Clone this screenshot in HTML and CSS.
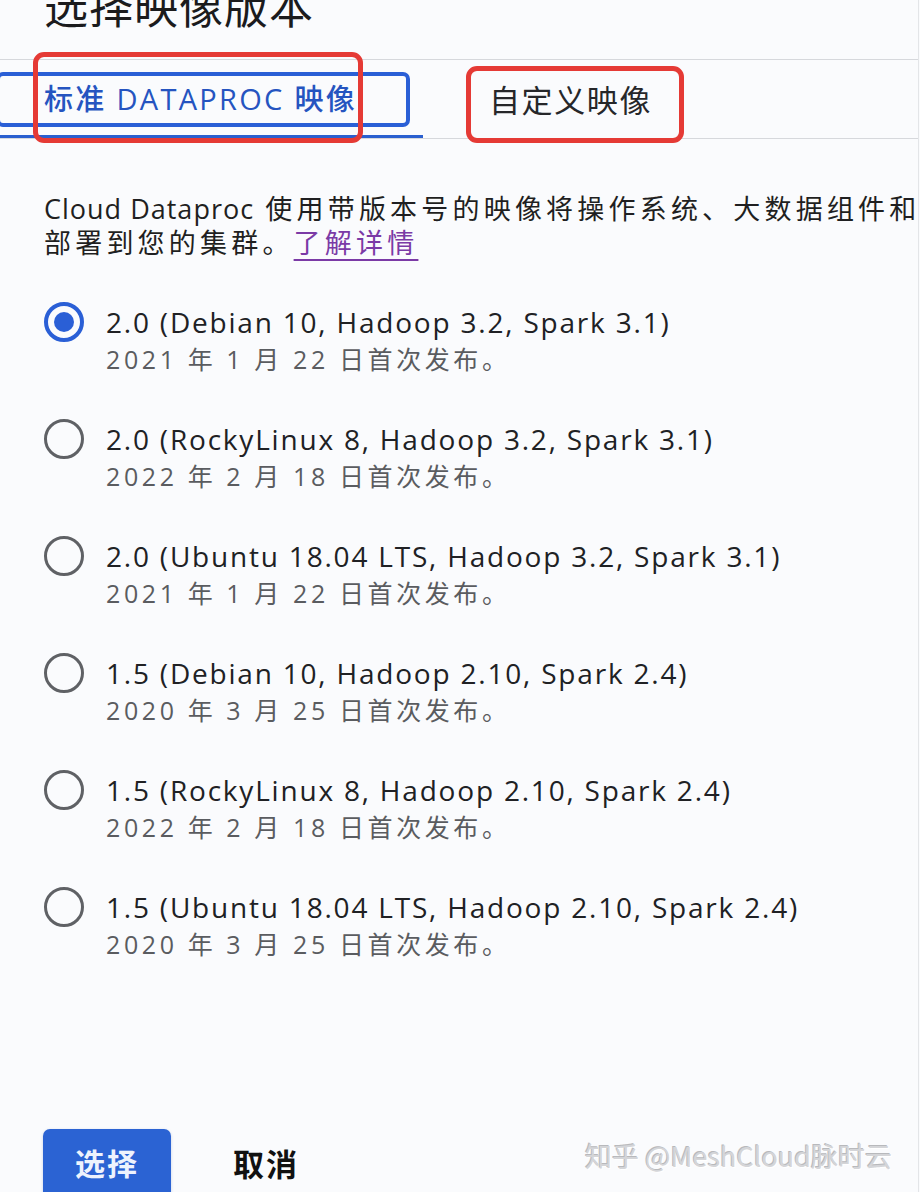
FILE: index.html
```html
<!DOCTYPE html>
<html lang="zh-CN">
<head>
<meta charset="utf-8">
<title>选择映像版本</title>
<link rel="stylesheet" href="styles.css">
</head>
<body>
<div class="page">
  <header class="head">
    <h1 class="title">选择映像版本</h1>
  </header>
  <nav class="tabs">
    <div class="tab tab-active"><span class="tab-label">标准 DATAPROC 映像</span></div>
    <div class="tab tab-other"><span class="tab-label">自定义映像</span></div>
    <div class="mark mark-1"></div>
    <div class="mark mark-2"></div>
  </nav>
  <p class="intro"><span class="line"><span class="latin">Cloud Dataproc</span> 使用带版本号的映像将操作系统、大数据组件和其他软件</span><span class="line">部署到您的集群。<a class="link" href="#">了解详情</a></span></p>
  <ul class="opts">
    <li class="opt">
      <span class="radio radio-on"></span>
      <div class="opt-text"><div class="opt-title">2.0 (Debian 10, Hadoop 3.2, Spark 3.1)</div><div class="opt-sub">2021 年 1 月 22 日首次发布。</div></div>
    </li>
    <li class="opt">
      <span class="radio"></span>
      <div class="opt-text"><div class="opt-title">2.0 (RockyLinux 8, Hadoop 3.2, Spark 3.1)</div><div class="opt-sub">2022 年 2 月 18 日首次发布。</div></div>
    </li>
    <li class="opt">
      <span class="radio"></span>
      <div class="opt-text"><div class="opt-title">2.0 (Ubuntu 18.04 LTS, Hadoop 3.2, Spark 3.1)</div><div class="opt-sub">2021 年 1 月 22 日首次发布。</div></div>
    </li>
    <li class="opt">
      <span class="radio"></span>
      <div class="opt-text"><div class="opt-title">1.5 (Debian 10, Hadoop 2.10, Spark 2.4)</div><div class="opt-sub">2020 年 3 月 25 日首次发布。</div></div>
    </li>
    <li class="opt">
      <span class="radio"></span>
      <div class="opt-text"><div class="opt-title">1.5 (RockyLinux 8, Hadoop 2.10, Spark 2.4)</div><div class="opt-sub">2022 年 2 月 18 日首次发布。</div></div>
    </li>
    <li class="opt">
      <span class="radio"></span>
      <div class="opt-text"><div class="opt-title">1.5 (Ubuntu 18.04 LTS, Hadoop 2.10, Spark 2.4)</div><div class="opt-sub">2020 年 3 月 25 日首次发布。</div></div>
    </li>
  </ul>
  <footer class="actions">
    <button class="btn btn-primary">选择</button>
    <button class="btn btn-text">取消</button>
    <span class="watermark">知乎 @MeshCloud脉时云</span>
  </footer>
</div>
</body>
</html>
```

FILE: styles.css
```css
html, body {
  margin: 0;
  padding: 0;
  background: #fafbfd;
}
body {
  font-family: "Open Sans", "Noto Sans CJK SC", "Noto Sans", sans-serif;
  color: #202124;
  width: 920px;
  height: 1192px;
  overflow: hidden;
}
.page {
  width: 918px;
  height: 1192px;
  border-right: 1px solid #e3e5e8;
  overflow: hidden;
  position: relative;
}
.head {
  height: 59px;
  border-bottom: 1px solid #d6d8dc;
  overflow: hidden;
}
.title {
  margin: -19px 0 0 44px;
  font-family: "Noto Sans CJK SC", sans-serif;
  font-size: 44px;
  line-height: 48px;
  font-weight: 400;
  color: #1b1b1d;
  letter-spacing: 1px;
}
.tabs {
  position: relative;
  height: 78px;
  border-bottom: 1px solid #d6d8dc;
  display: flex;
}
.tab {
  height: 78px;
  display: flex;
  align-items: center;
  box-sizing: border-box;
}
.tab-active {
  width: 423px;
  position: relative;
  border-bottom: 3px solid #2a5fcf;
  padding-left: 44px;
}
.tab-active::before {
  content: "";
  position: absolute;
  left: -4px;
  top: 12px;
  width: 414px;
  height: 55px;
  border: 4px solid #2a5fd6;
  border-radius: 7px;
  box-sizing: border-box;
}
.tab-active .tab-label {
  color: #2554c0;
  font-size: 29px;
  font-weight: 500;
  letter-spacing: 2.3px;
  margin-top: -2px;
}
.tab-other {
  padding-left: 66px;
}
.tab-other .tab-label {
  color: #26272a;
  font-size: 31px;
  letter-spacing: 1.6px;
  margin-top: -2px;
}
.mark {
  position: absolute;
  border: 5px solid #e53a35;
  border-radius: 11px;
  box-sizing: border-box;
}
.mark-1 {
  left: 33px;
  top: -8px;
  width: 330px;
  height: 91px;
}
.mark-2 {
  left: 466px;
  top: 6px;
  width: 218px;
  height: 77px;
}
.intro {
  margin: 53px 0 0 44px;
  font-size: 27px;
  line-height: 34px;
  letter-spacing: 4.2px;
  color: #1f1f21;
}
.latin {
  letter-spacing: 1px;
}
.line {
  display: block;
  white-space: nowrap;
}
.link {
  color: #7b3aa6;
  text-decoration: underline;
  text-underline-offset: 6px;
  text-decoration-thickness: 2px;
}
.opts {
  list-style: none;
  margin: 44px 0 0 44px;
  padding: 0;
  display: flex;
  flex-direction: column;
  gap: 44px;
}
.opt {
  display: flex;
  align-items: flex-start;
  gap: 22px;
}
.radio {
  flex: none;
  width: 40px;
  height: 40px;
  margin-top: -2px;
  border-radius: 50%;
  border: 3.5px solid #5f6165;
  box-sizing: border-box;
  position: relative;
}
.radio-on {
  border: 4px solid #2a5fd6;
}
.radio-on::after {
  content: "";
  position: absolute;
  left: 6px;
  top: 6px;
  width: 20px;
  height: 20px;
  border-radius: 50%;
  background: #2a5fd6;
}
.opt-title {
  font-size: 28px;
  line-height: 36px;
  color: #202124;
  letter-spacing: 1.8px;
  white-space: nowrap;
}
.opt-sub {
  margin-top: 1px;
  font-size: 25px;
  line-height: 36px;
  color: #5a5c60;
  letter-spacing: 3.6px;
  white-space: nowrap;
}
.actions {
  position: absolute;
  left: 0;
  right: 0;
  top: 1129px;
  height: 80px;
  display: flex;
  align-items: flex-start;
  padding-left: 43px;
}
.btn {
  font-family: "Noto Sans CJK SC", sans-serif;
  font-weight: 700;
  font-size: 30px;
  border: none;
  cursor: pointer;
}
.btn-primary {
  width: 128px;
  height: 80px;
  background: #2b63d3;
  color: #eef3fd;
  border-radius: 7px;
  padding: 0 0 14px 0;
  box-shadow: 0 1px 3px rgba(40, 80, 160, 0.25);
  letter-spacing: 2px;
}
.btn-text {
  background: transparent;
  color: #111;
  height: 66px;
  margin-left: 48px;
  font-size: 31px;
  padding: 0 14px;
  letter-spacing: 2px;
}
.watermark {
  position: absolute;
  left: 585px;
  top: 9px;
  font-family: "Noto Sans CJK SC", sans-serif;
  font-size: 27px;
  line-height: 36px;
  color: #d4d5d8;
  text-shadow: -1px -1px 0 #b8b9bc, 1px 1px 0 #ffffff;
  white-space: nowrap;
}
```
